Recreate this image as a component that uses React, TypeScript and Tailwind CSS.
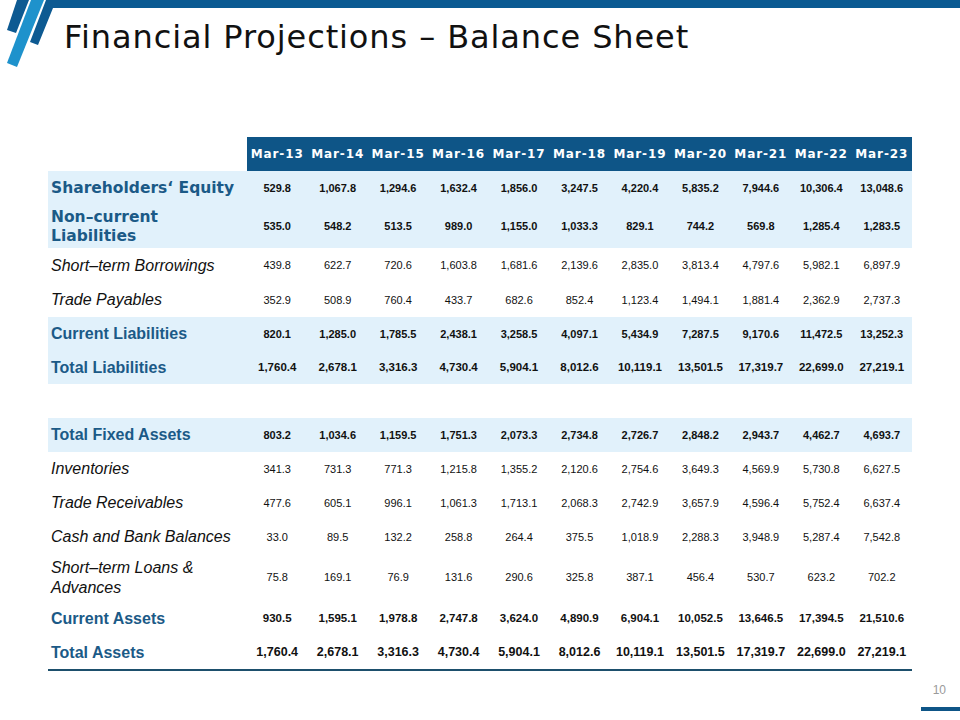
import React from "react";

type Kind = "head" | "sub" | "total";
interface IRow {
  label: string;
  kind: Kind;
  shaded?: boolean;
  height: string;
  numSize: string;
  values: string[];
}

const years = ["Mar-13", "Mar-14", "Mar-15", "Mar-16", "Mar-17", "Mar-18", "Mar-19", "Mar-20", "Mar-21", "Mar-22", "Mar-23"];

const liabilities: IRow[] = [
  {
    label: "Shareholders‘ Equity",
    kind: "head",
    shaded: true,
    height: "h-[34px]",
    numSize: "text-[11px]",
    values: ["529.8", "1,067.8", "1,294.6", "1,632.4", "1,856.0", "3,247.5", "4,220.4", "5,835.2", "7,944.6", "10,306.4", "13,048.6"],
  },
  {
    label: "Non–current Liabilities",
    kind: "head",
    shaded: true,
    height: "h-[43px]",
    numSize: "text-[11px]",
    values: ["535.0", "548.2", "513.5", "989.0", "1,155.0", "1,033.3", "829.1", "744.2", "569.8", "1,285.4", "1,283.5"],
  },
  {
    label: "Short–term Borrowings",
    kind: "sub",
    height: "h-[35px]",
    numSize: "text-[11px]",
    values: ["439.8", "622.7", "720.6", "1,603.8", "1,681.6", "2,139.6", "2,835.0", "3,813.4", "4,797.6", "5,982.1", "6,897.9"],
  },
  {
    label: "Trade Payables",
    kind: "sub",
    height: "h-[34px]",
    numSize: "text-[11px]",
    values: ["352.9", "508.9", "760.4", "433.7", "682.6", "852.4", "1,123.4", "1,494.1", "1,881.4", "2,362.9", "2,737.3"],
  },
  {
    label: "Current Liabilities",
    kind: "total",
    shaded: true,
    height: "h-[34px]",
    numSize: "text-[11px]",
    values: ["820.1", "1,285.0", "1,785.5", "2,438.1", "3,258.5", "4,097.1", "5,434.9", "7,287.5", "9,170.6", "11,472.5", "13,252.3"],
  },
  {
    label: "Total Liabilities",
    kind: "total",
    shaded: true,
    height: "h-[33px]",
    numSize: "text-[11.5px]",
    values: ["1,760.4", "2,678.1", "3,316.3", "4,730.4", "5,904.1", "8,012.6", "10,119.1", "13,501.5", "17,319.7", "22,699.0", "27,219.1"],
  },
];

const assets: IRow[] = [
  {
    label: "Total Fixed Assets",
    kind: "total",
    shaded: true,
    height: "h-[34px]",
    numSize: "text-[11px]",
    values: ["803.2", "1,034.6", "1,159.5", "1,751.3", "2,073.3", "2,734.8", "2,726.7", "2,848.2", "2,943.7", "4,462.7", "4,693.7"],
  },
  {
    label: "Inventories",
    kind: "sub",
    height: "h-[34px]",
    numSize: "text-[11px]",
    values: ["341.3", "731.3", "771.3", "1,215.8", "1,355.2", "2,120.6", "2,754.6", "3,649.3", "4,569.9", "5,730.8", "6,627.5"],
  },
  {
    label: "Trade Receivables",
    kind: "sub",
    height: "h-[34px]",
    numSize: "text-[11px]",
    values: ["477.6", "605.1", "996.1", "1,061.3", "1,713.1", "2,068.3", "2,742.9", "3,657.9", "4,596.4", "5,752.4", "6,637.4"],
  },
  {
    label: "Cash and Bank Balances",
    kind: "sub",
    height: "h-[34px]",
    numSize: "text-[11px]",
    values: ["33.0", "89.5", "132.2", "258.8", "264.4", "375.5", "1,018.9", "2,288.3", "3,948.9", "5,287.4", "7,542.8"],
  },
  {
    label: "Short–term Loans & Advances",
    kind: "sub",
    height: "h-[47px]",
    numSize: "text-[11px]",
    values: ["75.8", "169.1", "76.9", "131.6", "290.6", "325.8", "387.1", "456.4", "530.7", "623.2", "702.2"],
  },
  {
    label: "Current Assets",
    kind: "total",
    height: "h-[35px]",
    numSize: "text-[11.5px]",
    values: ["930.5", "1,595.1", "1,978.8", "2,747.8", "3,624.0", "4,890.9", "6,904.1", "10,052.5", "13,646.5", "17,394.5", "21,510.6"],
  },
  {
    label: "Total Assets",
    kind: "total",
    height: "h-[33px]",
    numSize: "text-[12.5px]",
    values: ["1,760.4", "2,678.1", "3,316.3", "4,730.4", "5,904.1", "8,012.6", "10,119.1", "13,501.5", "17,319.7", "22,699.0", "27,219.1"],
  },
];

const Row: React.FC<{ row: IRow }> = ({ row }) => {
  let labelClass = "font-['Liberation_Sans',Arial,sans-serif] italic text-[16px] leading-[20px] text-[#111]";
  if (row.kind === "head")
    labelClass = "font-['DejaVu_Sans',Verdana,sans-serif] font-bold text-[15.5px] leading-[19px] text-[#1b5a87]";
  if (row.kind === "total")
    labelClass = "font-['Liberation_Sans',Arial,sans-serif] font-bold text-[16px] leading-[20px] text-[#1b5a87]";

  const numWeight = row.kind === "sub" ? "font-normal" : "font-bold";

  return (
    <tr className={`${row.shaded ? "bg-[#e1f1fb]" : ""} ${row.height}`}>
      <td className={`pl-[3px] pr-1 ${labelClass}`}>{row.label}</td>
      {row.values.map((v, i) => (
        <td
          key={i}
          className={`text-center font-['Liberation_Sans',Arial,sans-serif] text-[#111] ${row.numSize} ${numWeight}`}
        >
          {v}
        </td>
      ))}
    </tr>
  );
};

export default function App() {
  return (
    <div className="relative w-[960px] h-[720px] bg-white overflow-hidden">
      {/* top bar and logo stripes */}
      <div className="flex">
        <svg width="60" height="70" viewBox="0 0 60 70" className="shrink-0">
          <polygon points="17,0 29,0 16,33 7,30" fill="#0d5a92" />
          <polygon points="31,0 44,0 17,67 7,63" fill="#1e92cc" />
          <polygon points="46,0 60,0 60,8 53,8 38,45 30,42" fill="#0d5a92" />
        </svg>
        <div className="h-[8px] flex-1 bg-[#0a5a92]" />
      </div>

      <h1 className="absolute left-[64px] top-[17px] font-['DejaVu_Sans',Verdana,sans-serif] text-[32px] leading-[40px] tracking-[0.9px] text-[#111]">
        Financial Projections – Balance Sheet
      </h1>

      <div className="mt-[67px] ml-[48px] w-[864px] border-b-2 border-[#1d4f6c]">
        <table className="w-full table-fixed border-collapse">
          <colgroup>
            <col className="w-[199px]" />
            {years.map((y) => (
              <col key={y} />
            ))}
          </colgroup>
          <thead>
            <tr className="h-[34px]">
              <th />
              {years.map((y) => (
                <th
                  key={y}
                  className="bg-[#0e5587] text-white font-['DejaVu_Sans',Verdana,sans-serif] font-bold text-[12px] tracking-[0.9px] text-center"
                >
                  {y}
                </th>
              ))}
            </tr>
          </thead>
          <tbody>
            {liabilities.map((r) => (
              <Row key={r.label} row={r} />
            ))}
            <tr className="h-[34px]">
              <td colSpan={12} />
            </tr>
            {assets.map((r) => (
              <Row key={r.label} row={r} />
            ))}
          </tbody>
        </table>
      </div>

      <div className="absolute right-[14px] top-[681px] font-['Liberation_Sans',Arial,sans-serif] text-[12px] text-[#9a9a9a]">
        10
      </div>
      <div className="absolute right-0 top-[707px] w-[39px] h-[4px] bg-[#0e5587]" />
    </div>
  );
}
